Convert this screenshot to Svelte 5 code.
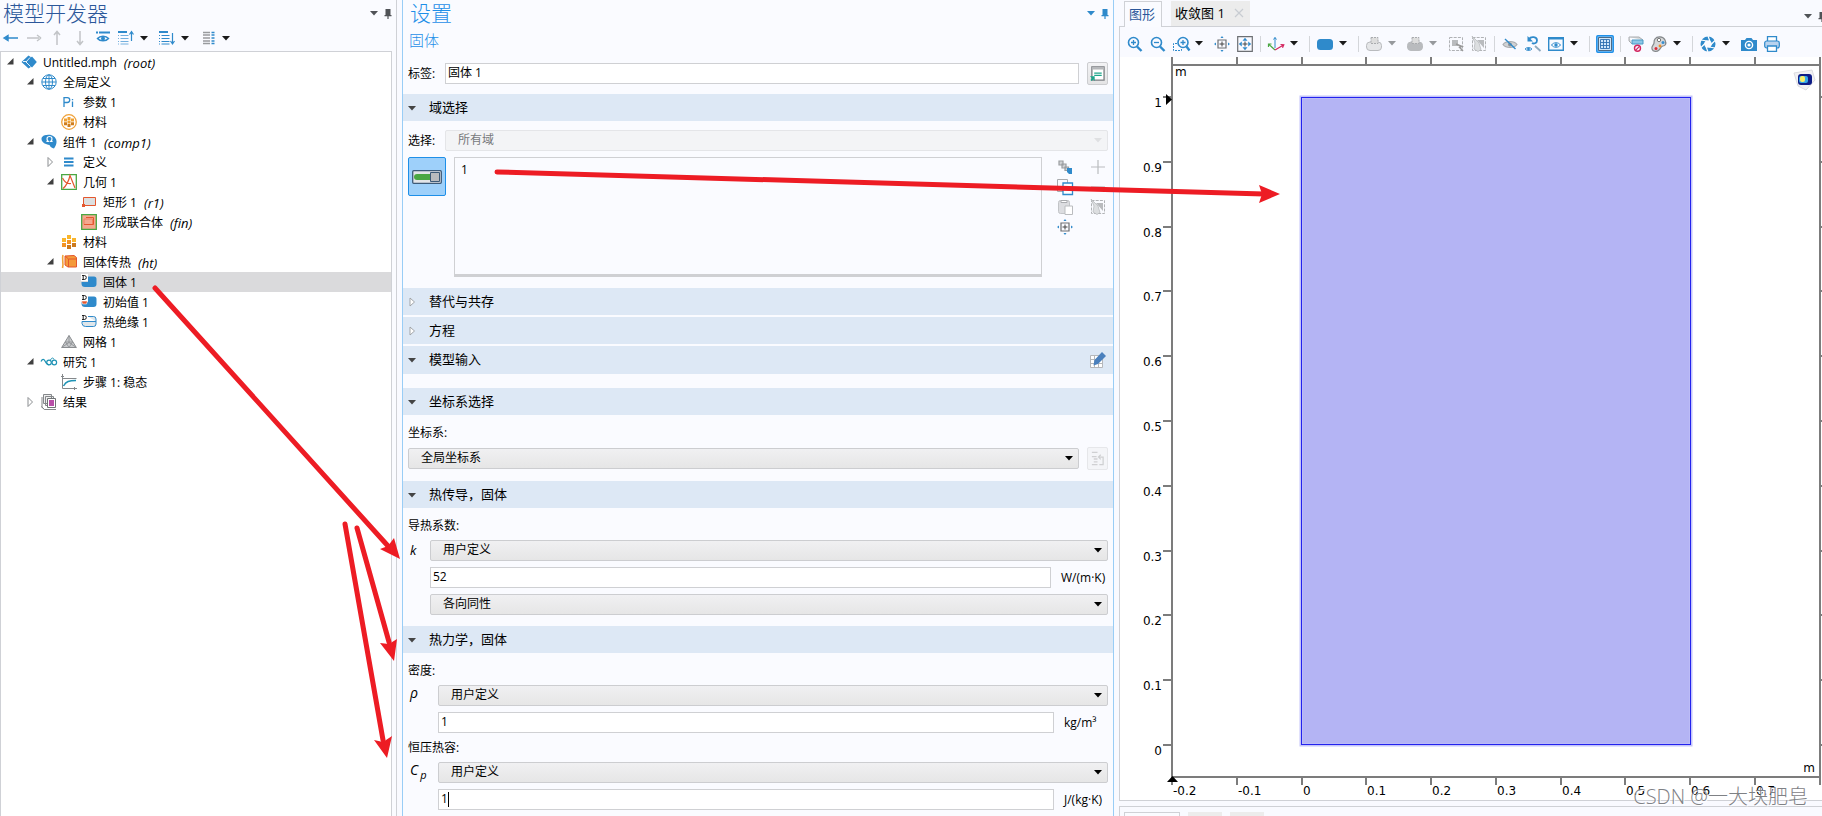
<script>
  const tree = [
    { depth: 0, icon: 'root', text: 'Untitled.mph', tag: 'root', open: true },
    { depth: 1, icon: 'globe', text: '全局定义', open: true },
    { depth: 2, icon: 'pi', text: '参数 1' },
    { depth: 2, icon: 'matglobal', text: '材料' },
    { depth: 1, icon: 'component', text: '组件 1', tag: 'comp1', open: true },
    { depth: 2, icon: 'defs', text: '定义', open: false },
    { depth: 2, icon: 'geom', text: '几何 1', open: true },
    { depth: 3, icon: 'rect', text: '矩形 1', tag: 'r1' },
    { depth: 3, icon: 'union', text: '形成联合体', tag: 'fin' },
    { depth: 2, icon: 'mat', text: '材料' },
    { depth: 2, icon: 'heat', text: '固体传热', tag: 'ht', open: true },
    { depth: 3, icon: 'solid', text: '固体 1', selected: true },
    { depth: 3, icon: 'initial', text: '初始值 1' },
    { depth: 3, icon: 'insul', text: '热绝缘 1' },
    { depth: 2, icon: 'mesh', text: '网格 1' },
    { depth: 1, icon: 'study', text: '研究 1', open: true },
    { depth: 2, icon: 'step', text: '步骤 1: 稳态' },
    { depth: 1, icon: 'results', text: '结果', open: false }
  ];

  const treeTools = [
    'back', 'fwd', 'up', 'down', 'show', 'collapse', 'caret', 'expand', 'caret', 'columns', 'caret'
  ];
  const graphTools = [
    'zoomin', 'zoomout', 'zoombox', 'caret', 'zoomsel', 'zoomext', 'sep',
    'axes', 'caret', 'sep', 'domain', 'caret', 'sep',
    'selbox', 'caretgray', 'deselbox', 'caretgray', 'pick', 'clearsel', 'sep',
    'hide', 'resethide', 'view', 'caret', 'sep', 'grid', 'sep',
    'noclip', 'palette', 'caret', 'sep', 'aperture', 'caret', 'camera', 'print'
  ];

  const xLabels = ['-0.2', '-0.1', '0', '0.1', '0.2', '0.3', '0.4', '0.5', '0.6', '0.7', ''];
  const yLabels = ['1', '0.9', '0.8', '0.7', '0.6', '0.5', '0.4', '0.3', '0.2', '0.1', '0'];
  const xAt = (i) => Math.round(52 + i * 64.75);
  const yAt = (i) => Math.round(40 + i * 64.8);

  let label = $state('固体 1');
  let k = $state('52');
  let rho = $state('1');
  let cp = $state('1');
</script>

{#snippet icon(name)}
  <svg class="ico" viewBox="0 0 16 16" width="16" height="16" fill="none" aria-hidden="true">
    {#if name === 'root'}
      <path d="M7.500 1.500L12 4.500L7 8L12 11.500L7.500 14.500L.500 8z" fill="#2f8acb" /><path d="M11 2.500L15.800 8L11 13.500L5.500 8z" fill="#2f8acb" /><path d="M9 3.500L5 8l4.500 4.500M2 7.500h4" stroke="#e4f1fb" stroke-width="1" />
    {:else if name === 'globe'}
      <g stroke="#2f8acb"><circle cx="8" cy="8" r="7.200" /><ellipse cx="8" cy="8" rx="3.500" ry="7.200" /><path d="M8 1v14M1 8h14M2 4.500h12M2 11.500h12" /></g>
    {:else if name === 'pi'}
      <g stroke="#2f8acb" stroke-width="1.300"><path d="M3 13V3.600h3.300a2.400 2.400 0 0 1 0 4.900H3M11.500 7.500V13M11.500 5v1.200" /></g>
    {:else if name === 'matglobal'}
      <circle cx="8" cy="8" r="7.300" stroke="#f0a23a" stroke-width="1.300" />
      <path d="M3 4.500h3v3H3zM6.500 3h3v3h-3zM10 4.500h3v3h-3zM6.500 6.500h3v3h-3z" fill="#f0a030" /><path d="M3 8.200h3v3H3zM10 8.200h3v3h-3zM6.500 10h3v3h-3z" fill="#cf7d1c" />
    {:else if name === 'mat'}
      <path d="M1 4h4v4H1zM6 1h4v4H6zM11 4h4v4h-4z" fill="#f9b52b" /><path d="M6 6h4v4H6zM1 9h4v4H1z" fill="#f29325" /><path d="M6 11h4v4H6zM11 9h4v4h-4z" fill="#cc7a1e" />
    {:else if name === 'component'}
      <path d="M6 1c4-1 9 1.500 9.500 6 .3 3-1 5-2.500 7.500-2-.5-4-1.500-4.500-3.500C5 10.500.500 8.500.500 5 .5 2.500 3 1 6 1z" fill="#2f8acb" /><path d="M6 8V7.300h1.200C5 5 6 2.500 8.500 2.500S12 5 9.800 7.300H11V8" stroke="#fff" stroke-width="1.200" />
    {:else if name === 'defs'}
      <path d="M3 4.500h9.500M3 8h9.500M3 11.500h9.500" stroke="#2f8acb" stroke-width="2" />
    {:else if name === 'geom'}
      <path d="M.7.700h14.600v14.600H.7z" fill="#fff" stroke="#4aa742" stroke-width="1.300" /><path d="M1.500 4c2 4 5 6 8.500 5.500M2 14.500C6 11 8 6 9 1.500L14 14" stroke="#e4572e" stroke-width="1.200" />
    {:else if name === 'rect'}
      <path d="M2.500 3.500h12v8h-12z" fill="#dcdfe0" stroke="#e4572e" /><path d="M1 10h3v3H1z" fill="#e4572e" />
    {:else if name === 'union'}
      <path d="M.7.700h14.600v14.600H.7z" fill="#f5a88f" stroke="#4aa742" stroke-width="1.300" /><path d="M3 5h8.500v5.500H3z" stroke="#f08060" /><path d="M5 3.500h7.500v7H3" stroke="#e4572e" />
    {:else if name === 'heat'}
      <path d="M2 1C.500 5 3 8 1.500 14" stroke="#f0a23a" stroke-width="1.600" /><path d="M4 2l9-.5 2.500 2v9.500H7L4 11z" fill="#f49a3a" stroke="#e4572e" /><path d="M4 2l3.500 3h8M7.500 5v8" stroke="#e4572e" />
    {:else if name === 'solid' || name === 'initial'}
      <path d="M7 2.500h6a2.500 2.500 0 0 1 2.500 2.500v5a3 3 0 0 1-3 3H4A3.500 3.500 0 0 1 .5 9.500V8H7z" fill="#2f8acb" /><path d="M0 0h7v7H0z" fill="#fff" /><path d="M1 1.500h2.300a2 2 0 0 1 0 4H1M2.200 1.500v4" stroke="#222" />
      {#if name === 'initial'}<path d="M.500 7h6l-1 3h-4z" fill="#e4572e" stroke="#fff" stroke-width=".6" />{/if}
    {:else if name === 'insul'}
      <path d="M7 2.500h5.500a2.500 2.500 0 0 1 2.500 2.500v5a2.500 2.500 0 0 1-2.500 2.500h-8A3.500 3.500 0 0 1 1 9.500V7.500h14" fill="#dfe6ea" stroke="#2f8acb" /><path d="M0 0h6.500v6.500H0z" fill="#fff" /><path d="M1 1.500h2.300a2 2 0 0 1 0 4H1M2.200 1.500v4" stroke="#222" />
    {:else if name === 'mesh'}
      <path d="M8 1.500L15.300 13.500H.7z" fill="#c9cbcd" stroke="#8a8d90" /><path d="M8 1.500v7L.7 13.500M8 8.500l7.300 5M4.500 8h7M8 13.500l-3.500-5.500M8 13.500l3.500-5.500" stroke="#8a8d90" stroke-width=".8" />
    {:else if name === 'study'}
      <path d="M0 7.500C1.500 4.500 3 5 4 7s2 4 4 3.500" stroke="#1f93b5" stroke-width="1.200" /><circle cx="8" cy="8.500" r="2.300" stroke="#1f93b5" stroke-width="1.200" /><circle cx="13.300" cy="8.500" r="2.300" stroke="#1f93b5" stroke-width="1.200" /><path d="M9.500 6c1-2.500 3-2.500 3.500-.5" stroke="#1f93b5" />
    {:else if name === 'step'}
      <path d="M1.500 0v14.500H16M0 2.500h3M13.500 13v3M1.500 4.500h14" stroke="#85888b" /><path d="M2.500 12C5 7.500 8 6.500 15 6.500" stroke="#1f93b5" stroke-width="1.500" />
    {:else if name === 'results'}
      <path d="M1 3v10l2.500 2.500" stroke="#85888b" /><path d="M2.500.500h8v9h-8zM4.500 2.500h8v9h-8z" fill="#eee" stroke="#85888b" /><path d="M6.500 4.500h8v9h-8z" fill="#fff" stroke="#6f7275" /><path d="M8 6h5v6H8z" fill="#b94fa8" /><path d="M0 12.500l3.500 3h11.500" stroke="#85888b" />
    {:else if name === 'back' || name === 'fwd'}
      {#if name === 'back'}<path d="M3 8h12M1 8l4-2.500v5z" stroke="#2f8acb" fill="#2f8acb" stroke-width="1.400" />{:else}<path d="M1 8h12M15 8l-4-3M15 8l-4 3" stroke="#c2c4c7" stroke-width="1.400" />{/if}
    {:else if name === 'up'}
      <path d="M8 15V2M5 5l3-3.500L11 5" stroke="#c2c4c7" stroke-width="1.500" />
    {:else if name === 'down'}
      <path d="M8 1v13M5 11l3 3.500L11 11" stroke="#c2c4c7" stroke-width="1.500" />
    {:else if name === 'show'}
      <path d="M1 2.500h2M4 2.500h11" stroke="#2f8acb" stroke-width="2" /><path d="M2.500 8.500C5 5.500 11 5.500 13.500 8.500 11 11.500 5 11.500 2.500 8.500z" stroke="#2f8acb" stroke-width="1.500" /><circle cx="8" cy="8.500" r="2" fill="#2f8acb" />
    {:else if name === 'collapse' || name === 'expand'}
      <path d="M0 2h9" stroke="#2f8acb" stroke-width="2" /><path d="M0 5.500h1M2.500 5.500h8M0 8.500h1M2.500 8.500h8M0 11.500h1M2.500 11.500h8M0 14h1M2.500 14h8" stroke={name === 'expand' ? '#2f8acb' : '#74b0de'} />
      {#if name === 'collapse'}<path d="M13.500 11V2M11.500 4.500l2-3 2 3" stroke="#2f8acb" stroke-width="1.200" />{:else}<path d="M13.500 3v10M11.500 11l2 3 2-3" stroke="#2f8acb" stroke-width="1.200" />{/if}
    {:else if name === 'columns'}
      <path d="M3 2.500h7M3 5h7M3 8h7M3 11h7M3 13.500h7" stroke="#999b9e" stroke-width="1.400" /><path d="M11.500 2.500h3M11.500 5h3M11.500 8h3M11.500 11h3M11.500 13.500h3" stroke="#2f8acb" stroke-width="1.400" />
    {:else if name === 'zoomin' || name === 'zoomout' || name === 'zoombox'}
      <g stroke="#2f8acb"><circle cx={name === 'zoombox' ? 10 : 6.5} cy="6.500" r="5" stroke-width="1.600" /><path d={name === 'zoombox' ? 'M13.500 10.500l3 4' : 'M10 10.500l4.500 4.500'} stroke-width="2.400" /></g>
      {#if name === 'zoombox'}<path d="M10 4v5M7.500 6.500h5" stroke="#2f8acb" stroke-width="1.300" /><path d="M4 7.500H.5v7h8V12" stroke="#2f8acb" stroke-dasharray="2 1" />{:else}<path d={name === 'zoomin' ? 'M6.500 4v5M4 6.500h5' : 'M4 6.500h5'} stroke="#2f8acb" stroke-width="1.300" />{/if}
    {:else if name === 'zoomsel'}
      <path d="M4 4h8v8H4z" stroke="#6c6f73" stroke-width="1.200" /><path d="M8 5.500v5M5.500 8h5" stroke="#444" /><path d="M8 0l1.500 2h-3zM8 16l1.500-2h-3zM0 8l2-1.500v3zM16 8l-2-1.500v3z" fill="#2f8acb" />
    {:else if name === 'zoomext'}
      <path d="M.7.700h14.600v14.600H.7z" stroke="#6c6f73" stroke-width="1.200" /><path d="M8 5.500v5M5.500 8h5" stroke="#444" /><path d="M8 1.800l2.500 3h-5zM8 14.200l2.500-3h-5zM1.800 8l3-2.500v5zM14.200 8l-3-2.500v5z" fill="#2f8acb" />
    {:else if name === 'axes'}
      <path d="M7 12V1.500M5.500 3.500l1.500-2 1.500 2" stroke="#2f8acb" /><path d="M7 14L1 8.500M.500 11V8h3" stroke="#4aa742" stroke-width="1.200" /><path d="M7 14l8.500-5M12.500 8.500l3.300.3-1.300 3" stroke="#d3255f" stroke-width="1.200" />
    {:else if name === 'domain'}
      <rect x="0" y="3" width="16" height="11" rx="3.500" fill="#2f8acb" />
    {:else if name === 'selbox' || name === 'deselbox'}
      <rect x=".5" y="6" width="15" height="8.500" rx="3.500" fill={name === 'selbox' ? '#e5e6e8' : '#b9bbbe'} stroke="#b9bbbe" /><path d="M5 1.500h7v6H5z" fill="#ddd" stroke="#a9abae" stroke-dasharray="2 1" />
    {:else if name === 'pick'}
      <path d="M1.500 1.500h13v13h-13z" stroke="#b0b2b5" stroke-dasharray="3 1.200" /><path d="M4 4h6v6H4z" fill="#b9bbbe" /><path d="M8 8l6 2.500-2.500.8L15 15" stroke="#999" stroke-width="1.400" />
    {:else if name === 'clearsel'}
      <path d="M1.500 1.500h13v13h-13z" stroke="#b0b2b5" stroke-dasharray="3 1.200" /><path d="M6 4h7v8z" fill="#b9bbbe" /><path d="M1 0l3 7-1 6 4 2.500 3-2L8 7z" fill="#dcdee0" stroke="#b9bbbe" stroke-width=".8" />
    {:else if name === 'hide'}
      <path d="M1 8.500c3-4 11-4 14 0-3 4-11 4-14 0z" fill="#d0d2d4" stroke="#a9abae" stroke-width="1.200" /><circle cx="8" cy="8.500" r="2" fill="#8f9296" /><path d="M3 3l10.500 10" stroke="#2f8acb" stroke-width="1.400" />
    {:else if name === 'resethide'}
      <path d="M4 3C6 0 12 .5 12 4.500c0 3-3.500 3.500-5 2.500" stroke="#2f8acb" stroke-width="1.800" /><path d="M2.500 0v5.500H8z" fill="#2f8acb" /><path d="M0 13c2-2 5-2 7 0-2 2-5 2-7 0z" stroke="#2f8acb" /><circle cx="3.500" cy="13" r="1.400" fill="#2f8acb" /><path d="M10 10l5.500 5" stroke="#8fa9bd" stroke-width="1.800" />
    {:else if name === 'view'}
      <path d="M.7 1.700h14.600v12.600H.7z" stroke="#2f8acb" stroke-width="1.400" /><path d="M0 2.500h16" stroke="#2f8acb" stroke-width="2" /><path d="M3.500 9c2-3 7-3 9 0-2 3-7 3-9 0z" stroke="#2f8acb" /><circle cx="8" cy="9" r="1.700" fill="#2f8acb" />
    {:else if name === 'grid'}
      <rect x="-.2" y="-.2" width="16.400" height="16.400" rx="1" fill="#9ed0fa" stroke="#1e8fe8" stroke-width="1.500" /><path d="M1.500 1.500h13v13h-13z" fill="#cfe6fa" stroke="#4d6a85" /><path d="M3.500 3.500h9v9h-9zM3.500 6.500h9M3.500 9.500h9M6.500 3.500v9M9.500 3.500v9" stroke="#2f6fb0" stroke-width=".9" />
    {:else if name === 'noclip'}
      <path d="M1 1h10l4 3M1 1v4l3 3" stroke="#aaadb0" fill="#d5d7d9" /><path d="M4 4h11v4H4z" fill="#8cc7e8" stroke="#4a9bc4" /><circle cx="9.500" cy="12.300" r="3" stroke="#d3255f" stroke-width="1.400" /><path d="M7.500 14.300l4-4" stroke="#d3255f" stroke-width="1.200" />
    {:else if name === 'palette'}
      <path d="M4 3c2-3 8-3 10 1s0 6-2 6-2 2-4 4-6 2-7-1 2-4 2-6 0-3 1-4z" fill="#d6d8da" stroke="#85888b" stroke-width="1.200" /><circle cx="8" cy="4" r="1.700" fill="#fff" stroke="#777" /><circle cx="5" cy="12.500" r="1.500" fill="#d92b3a" /><circle cx="9" cy="10" r="1.400" fill="#f0902c" /><circle cx="12" cy="6.500" r="1.500" fill="#3a8fd0" />
    {:else if name === 'aperture'}
      <circle cx="8" cy="8" r="5.600" stroke="#2f8acb" stroke-width="3.800" /><path d="M8 0l2 5.500M15 4.500L10.500 9M15 12l-6-1M8 16l-2-5.500M1 11.500L5.500 7M1 4l6 1" stroke="#fff" stroke-width="1.200" />
    {:else if name === 'camera'}
      <path d="M0 4h4l1.500-2h5L12 4h4v11H0z" fill="#2f8acb" /><circle cx="8" cy="9" r="3.600" stroke="#fff" stroke-width="1.400" /><circle cx="8" cy="9" r="1.600" fill="#fff" />
    {:else if name === 'print'}
      <path d="M3.500 5V.7h9V5" fill="#fff" stroke="#2f8acb" stroke-width="1.300" /><rect x=".7" y="5" width="14.600" height="7" rx="2" fill="#b9d3ee" stroke="#2f8acb" stroke-width="1.200" /><path d="M3.500 10h9v5.300h-9z" fill="#fff" stroke="#2f8acb" stroke-width="1.300" />
    {:else if name === 'goto'}
      <path d="M2 1h13v14H2z" fill="#fff" stroke="#7b7e82" stroke-width="1.400" /><path d="M2 2.500h13" stroke="#b5b7ba" stroke-width="2.500" /><path d="M4.500 7.500h8M4.500 10h8" stroke="#1da58a" stroke-width="1.300" /><path d="M0 11h5v5l-1.500-1.500L1.500 16l-1-1 1.500-2z" fill="#1da58a" />
    {:else if name === 'chain'}
      <path d="M2 2h4v4H2zM5 5h4v4H5zM8 8h3.500v3.500H8z" fill="#d0d2d4" stroke="#9a9da0" stroke-width="1.200" /><path d="M10 9h5v6h-3l-2-2z" fill="#2f8acb" />
    {:else if name === 'plus'}
      <path d="M8 1v14M1 8h14" stroke="#babcbf" stroke-width="1.200" />
    {:else if name === 'minus'}
      <path d="M1 8h14" stroke="#babcbf" stroke-width="1.200" />
    {:else if name === 'copy'}
      <path d="M.500 .500h10v12H.5z" stroke="#a9abae" /><path d="M6 4h9.500v11.500H6z" fill="#fff" stroke="#2f8acb" stroke-width="1.300" />
    {:else if name === 'paste'}
      <rect x="1.500" y="1.500" width="11" height="13" rx="2" fill="#dcdde0" stroke="#c2c4c7" /><path d="M4 3.500V1.500h6v2z" fill="#fff" stroke="#a9abae" /><path d="M8 7h7.500v8.500H8z" fill="#fff" stroke="#babcbf" />
    {:else if name === 'editgrid'}
      <path d="M.500 3.500h12v12H.5zM.5 7.500h12M.5 11.500h12M4.500 3.500v12M8.500 3.500v12" stroke="#b5b7ba" fill="#fff" /><path d="M12 0l4 4-8 8-4.500 1.500L4.500 8z" fill="#4a80bd" />
    {:else if name === 'tosource'}
      <path d="M2 1.500h6M2 6h5M4 8.500h4M4 11.500h4M2 14.500h6" stroke="#cfd0d2" stroke-width="1.400" /><path d="M9 6.500h5v8H10M11.500 4L9 6.500 11.500 9" stroke="#cfd0d2" stroke-width="1.300" />
    {/if}
  </svg>
{/snippet}

{#snippet caret(color)}
  <svg class="caret" viewBox="0 0 8 5" width="8" height="5" aria-hidden="true"><path d="M0 0h8L4 4.500z" fill={color} /></svg>
{/snippet}

{#snippet tool(name)}
  {#if name === 'sep'}
    <span class="sep"></span>
  {:else if name === 'caret'}
    <button class="drop" aria-label="menu">{@render caret('#1a1a1a')}</button>
  {:else if name === 'caretgray'}
    <button class="drop" aria-label="menu">{@render caret('#96999c')}</button>
  {:else}
    <button class="tool" aria-label={name}>{@render icon(name)}</button>
  {/if}
{/snippet}

{#snippet pin(color)}
  <svg viewBox="0 0 8 10" width="8" height="10" aria-hidden="true"><path d="M1.500 0h5v6h1v1.200H4.600V10H3.400V7.200H.500V6h1z" fill={color} /></svg>
{/snippet}

{#snippet heading(text, open)}
  <h3>
    <button class="fold">
      <svg viewBox="0 0 8 10" width="8" height="10" aria-hidden="true">
        {#if open}<path d="M0 3h8L4 7.500z" fill="#444" />{:else}<path d="M2 1l4.500 4L2 9z" fill="#fff" stroke="#9a9da0" stroke-width=".9" />{/if}
      </svg>
      <span>{text}</span>
    </button>
    {#if text === '模型输入'}<button class="tool" aria-label="编辑">{@render icon('editgrid')}</button>{/if}
  </h3>
{/snippet}

{#snippet choice(id, text, disabled)}
  <div class="select">
    <select {id} {disabled} aria-label={id}><option>{text}</option></select>
    {@render caret(disabled ? '#dfe0e2' : '#000')}
  </div>
{/snippet}

<div class="app">
  <aside class="panel builder">
    <header class="bar">
      <h1>模型开发器</h1>
      <span class="window">{@render caret('#505357')}{@render pin('#505357')}</span>
    </header>
    <div class="tools">
      {#each treeTools as t}{@render tool(t)}{/each}
    </div>
    <ul class="tree">
      {#each tree as n}
        <li class:selected={n.selected} style="padding-left: {n.depth * 20 + 4}px">
          <svg class="twist" viewBox="0 0 10 10" width="10" height="10" aria-hidden="true">
            {#if n.open === true}<path d="M8.500 1v6.500H2z" fill="#404040" />{:else if n.open === false}<path d="M3 .500L7.500 5 3 9.500z" fill="#fff" stroke="#8a8d90" />{/if}
          </svg>
          {@render icon(n.icon)}
          <span>{n.text}</span>
          {#if n.tag}<em>({n.tag})</em>{/if}
        </li>
      {/each}
    </ul>
  </aside>

  <main class="panel settings">
    <header class="bar">
      <h1>设置</h1>
      <span class="window">{@render caret('#2f8acb')}{@render pin('#2f8acb')}</span>
    </header>
    <h2>固体</h2>
    <div class="row titled">
      <label class="name" for="label">标签:</label>
      <input id="label" bind:value={label} />
      <button class="square" aria-label="转到">{@render icon('goto')}</button>
    </div>

    {@render heading('域选择', true)}
    <div class="body stack">
      <div class="row">
        <label class="name" for="domain">选择:</label>
        {@render choice('domain', '所有域', true)}
      </div>
      <div class="domains">
        <button class="active" aria-label="激活选择">
          <svg viewBox="0 0 30 14" width="30" height="14" aria-hidden="true"><rect x=".7" y=".7" width="28.600" height="12.600" rx="1" fill="#e3e5e8" stroke="#3d5a78" stroke-width="1.300" /><path d="M5 4h13v6H5a3 3 0 0 1 0-6z" fill="#4aa742" /><path d="M18.500 2.500h9v9h-9z" fill="#b9bbbe" stroke="#3d5a78" /></svg>
        </button>
        <div class="list">1</div>
        <div class="side">
          {#each ['chain', 'plus', 'copy', 'minus', 'paste', 'clearsel', 'zoomsel'] as s}{@render tool(s)}{/each}
        </div>
      </div>
    </div>

    <div class="closed">{@render heading('替代与共存', false)}</div>
    <div class="closed">{@render heading('方程', false)}</div>
    <div class="inputs">{@render heading('模型输入', true)}</div>

    {@render heading('坐标系选择', true)}
    <div class="body">
      <label class="caption" for="frame">坐标系:</label>
      <div class="row">
        {@render choice('frame', '全局坐标系', false)}
        <button class="square faint" aria-label="转到源" disabled>{@render icon('tosource')}</button>
      </div>
    </div>

    {@render heading('热传导，固体', true)}
    <div class="body">
      <label class="caption" for="k">导热系数:</label>
      <div class="fields narrow">
        <i>k</i>
        {@render choice('k-source', '用户定义', false)}
        <input id="k" bind:value={k} /><span class="unit">W/(m·K)</span>
        {@render choice('isotropy', '各向同性', false)}
      </div>
    </div>

    {@render heading('热力学，固体', true)}
    <div class="body last">
      <label class="caption" for="rho">密度:</label>
      <div class="fields wide">
        <i>ρ</i>
        {@render choice('rho-source', '用户定义', false)}
        <input id="rho" bind:value={rho} /><span class="unit">kg/m³</span>
      </div>
      <label class="caption next" for="cp">恒压热容:</label>
      <div class="fields wide">
        <i>C<sub>p</sub></i>
        {@render choice('cp-source', '用户定义', false)}
        <div class="editing"><input id="cp" bind:value={cp} /><span class="cursor"></span></div><span class="unit">J/(kg·K)</span>
      </div>
    </div>
  </main>

  <section class="graphics">
    <div class="tabs">
      <button class="tab current">图形</button>
      <button class="tab">收敛图 1
        <svg viewBox="0 0 10 10" width="10" height="10" aria-hidden="true"><path d="M1 1l8 8M9 1L1 9" stroke="#c8ccd2" stroke-width="1.200" /></svg>
      </button>
      <span class="window">{@render caret('#505357')}{@render pin('#505357')}</span>
    </div>
    <div class="tools">
      {#each graphTools as t}{@render tool(t)}{/each}
    </div>
    <div class="plot">
      <svg viewBox="0 0 702 743" preserveAspectRatio="xMidYMin meet" role="img" aria-label="几何 1">
        <rect x="181" y="40" width="390" height="648" fill="#b4b4f4" stroke="#c4c4fa" stroke-width="3" />
        <rect x="181.500" y="40.500" width="389" height="647" fill="none" stroke="#2323ee" />
        <g stroke="#7c7c7c" stroke-width="2" fill="none">
          <path d="M52 8H700V720H52z" />
          {#each xLabels as _, i}<path d="M{xAt(i)} 0v8M{xAt(i)} 720v8" />{/each}
          {#each yLabels as _, i}<path d="M43 {yAt(i)}h8M700 {yAt(i)}h8" />{/each}
        </g>
        <path d="M46 37v11l6-5.500zM47 725h11l-5.500-6z" fill="#000" />
        <g class="ticks">
          {#each xLabels as t, i}<text x={xAt(i) + 1} y="738">{t}</text>{/each}
          {#each yLabels as t, i}<text x="42" y={yAt(i) + 10} text-anchor="end">{t}</text>{/each}
          <text x="55" y="19">m</text><text x="695" y="715" text-anchor="end">m</text>
        </g>
        <path d="M674 16l18-3 3 10-9 10-8-4z" fill="#f1f1f3" stroke="#dcdcdf" />
        <rect x="678" y="17" width="14" height="11" rx="3" fill="#0d1c86" /><rect x="679" y="19" width="9" height="7" rx="2" fill="#35a7e8" /><rect x="680" y="19" width="5" height="6" rx="2" fill="#f6ee6a" />
      </svg>
    </div>
    <div class="dock"><span class="front"></span><span></span><span></span></div>
  </section>

  <svg class="marks" viewBox="0 0 1822 816" preserveAspectRatio="none" aria-hidden="true">
    <g stroke="#ed1c24" stroke-width="5" stroke-linecap="round">
      <path d="M155 288L388 546M497 172L1264 194M357 528L389 642M345 524L383 740" />
    </g>
    <g fill="#ed1c24">
      <path d="M400 559L380 549L388 546L394 538z" />
      <path d="M1280 194L1259 203L1262 194L1259 185z" />
      <path d="M394 661L380 643L389 644L397 639z" />
      <path d="M387 758L374 740L383 742L392 736z" />
    </g>
  </svg>
  <div class="watermark">CSDN @一大块肥皂</div>
</div>

<style>
  :global(body) { margin: 0; background: #f9faff; }
  .app {
    position: relative;
    display: grid;
    grid-template-columns: minmax(0, 397fr) minmax(0, 712fr) minmax(0, 703fr);
    column-gap: 5px;
    min-height: 100vh;
    overflow: hidden;
    font: 12px/20px "Open Sans", "Noto Sans CJK SC", sans-serif;
    color: #000;
  }
  .app * { box-sizing: border-box; }
  h1, h2, h3, ul { margin: 0; padding: 0; font-weight: 400; }
  button, input, select { font: inherit; color: inherit; margin: 0; padding: 0; }
  button { border: 0; background: none; }
  svg { display: block; flex: none; }
  .ico, .marks { overflow: visible; }
  .panel { display: flex; flex-direction: column; background: #fafbff; }
  .bar { display: flex; justify-content: space-between; height: 27px; }
  .bar h1 { font-size: 21px; line-height: 27px; font-weight: 300; }
  .window { display: flex; align-items: center; gap: 6px; }

  .builder { border-right: 1px solid #cfd1d6; }
  .builder .bar { padding: 0 4px 0 3px; }
  .builder h1 { color: #2b579a; }
  .tools { display: flex; align-items: center; gap: 7px; }
  .builder .tools { height: 24px; padding: 0 3px 2px; }
  .tool { width: 16px; height: 16px; }
  .drop { width: 8px; height: 16px; display: flex; align-items: center; margin: 0 4px 0 -1px; }
  .sep { width: 1px; height: 16px; background: #d4d6da; }
  .tree { flex: 1; margin-right: 4px; border: 1px solid #cfd1d6; border-bottom: 0; background: #fff; list-style: none; }
  .tree li { display: flex; align-items: center; gap: 6px; height: 20px; white-space: nowrap; }
  .tree span, .tree em { padding-top: 2px; }
  .tree em { margin-left: 1px; font-size: 13px; }
  .selected { background: #dadadc; }

  .settings { border: solid #99cdf6; border-width: 0 1px; }
  .settings .bar { padding: 0 4px 0 7px; }
  .settings h1, .settings h2 { color: #1e8fe8; }
  h2 { padding-left: 6px; font-size: 15px; line-height: 26px; height: 28px; font-weight: 300; }
  .row { display: flex; align-items: center; }
  .titled { padding: 0 5px; margin: 7px 0 9px; }
  .name { width: 37px; }
  input { flex: 1; min-width: 0; width: 100%; height: 21px; padding: 0 3px 3px 2px; border: 1px solid #cfd0d3; border-radius: 0; background: #fff; outline: 0; }
  .square { display: grid; place-items: center; width: 21px; height: 23px; margin-left: 8px; border: 1px solid #cccdd0; border-radius: 2px; background: linear-gradient(#f3f3f5, #e4e4e5); }
  .square :global(svg) { width: 15px; height: 15px; }
  .faint { border-color: #e6e7ea; background: #f4f5f8; }
  h3 { display: flex; align-items: center; justify-content: space-between; height: 27px; padding: 0 7px 0 5px; background: #dde8f5; font-size: 13px; }
  .fold { display: flex; align-items: center; gap: 13px; line-height: 24px; }
  .fold span { padding-bottom: 2px; }
  .closed { padding-bottom: 2px; }
  .inputs { padding-bottom: 14px; }
  .inputs :global(h3) { height: 28px; }
  .body { padding: 9px 5px 11px; }
  .body.last { padding-bottom: 5px; }
  .stack { display: flex; flex-direction: column; gap: 6px; }
  .select { display: grid; flex: 1; align-items: center; min-width: 0; }
  .select select { grid-area: 1 / 1; appearance: none; width: 100%; height: 21px; padding: 0 20px 1px 12px; border: 1px solid #cccdd0; border-radius: 2px; background: linear-gradient(#f0f0f2, #e6e6e6); line-height: 18px; }
  .select :global(.caret) { grid-area: 1 / 1; justify-self: end; margin-right: 6px; pointer-events: none; }
  .select select:disabled { border-color: #e4e5e8; background: #f3f4f6; color: #77797c; opacity: 1; }
  .domains { display: flex; align-items: flex-start; }
  .active { display: grid; place-items: center; width: 38px; height: 39px; border: 1px solid #1e8fe8; border-radius: 2px; background: #9ed0fa; }
  .list { flex: 1; height: 120px; margin-left: 8px; padding: 2px 6px; border: 1px solid #cfd0d3; border-bottom-width: 3px; }
  .side { display: grid; grid-template-columns: 16px 16px; gap: 4px 17px; margin: 2px 2px 0 15px; }
  .caption { display: block; line-height: 18px; margin-bottom: 5px; }
  .next { margin-top: 6px; }
  .fields { display: grid; row-gap: 6px; align-items: center; }
  .narrow { grid-template-columns: 22px minmax(0, 1fr) 57px; }
  .wide { grid-template-columns: 30px minmax(0, 1fr) 54px; }
  .fields i { grid-column: 1; padding-left: 2px; font-size: 13px; line-height: 20px; height: 21px; }
  .wide i { font-size: 14px; line-height: 15px; }
  .fields sub { font-size: 11px; line-height: 0; padding-left: 2px; }
  .fields .select { grid-column: 2 / 4; }
  .fields input, .editing { grid-column: 2; }
  .unit { padding-left: 10px; white-space: nowrap; line-height: 20px; }
  .editing { position: relative; display: flex; }
  .cursor { position: absolute; left: 10px; top: 3px; width: 1px; height: 15px; background: #000; }

  .graphics { display: flex; flex-direction: column; }
  .tabs { display: flex; align-items: flex-end; gap: 9px; height: 27px; padding-left: 5px; border-bottom: 1px solid #cfd1d6; font-size: 13px; }
  .tab { display: flex; align-items: center; gap: 9px; height: 25px; padding: 0 6px 2px 4px; background: #ececec; white-space: nowrap; }
  .tab.current { height: 26px; margin-bottom: -1px; border: 1px solid #cfd1d6; border-bottom: 0; background: #fafbff; color: #2b579a; }
  .tabs .window { margin: 0 -4px 0 auto; height: 19px; }
  .graphics .tools { height: 30px; padding: 3px 0 0 7px; border-left: 1px solid #cfd1d6; }
  .plot { flex: 1; background: #fff; border: solid #cfd1d6; border-width: 0 0 1px 1px; }
  .plot svg { width: 100%; }
  .ticks { font: 12px "DejaVu Sans", sans-serif; fill: #000; }
  .dock { display: flex; gap: 8px; height: 10px; margin-top: 5px; padding: 5px 0 0 4px; border: solid #cfd1d6; border-width: 1px 0 0 1px; }
  .dock span { width: 34px; background: #ececec; }
  .dock .front { width: 56px; border: 1px solid #cfd1d6; border-bottom: 0; background: #fafbff; }

  .marks { position: absolute; inset: 0; width: 100%; height: 100%; pointer-events: none; }
  .watermark { position: absolute; right: 14px; bottom: 4px; font-size: 20px; line-height: 30px; font-weight: 300; color: #7f8185; text-shadow: 1px 1px 0 #fff; pointer-events: none; }
</style>
